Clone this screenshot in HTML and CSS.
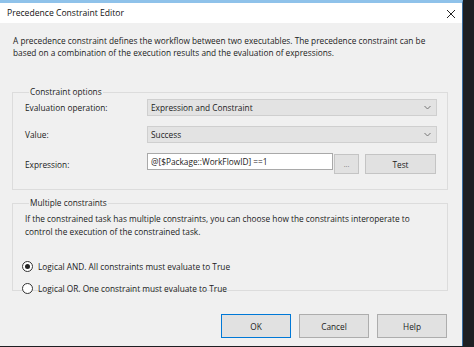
FILE: index.html
```html
<!DOCTYPE html>
<html>
<head>
<meta charset="utf-8">
<link rel="stylesheet" href="styles.css">
</head>
<body>
<div class="window">
  <div class="titlebar">
    <span class="title">Precedence Constraint Editor</span>
    <svg class="close" width="10" height="10" viewBox="0 0 10 10"><path d="M1 1 L9 9 M9 1 L1 9" stroke="#222" stroke-width="1" fill="none"/></svg>
  </div>
  <div class="content">
    <p class="desc">A precedence constraint defines the workflow between two executables. The precedence constraint can be based on a combination of the execution results and the evaluation of expressions.</p>

    <fieldset class="group group-options">
      <legend>Constraint options</legend>
      <div class="grid">
        <label class="lbl">Evaluation operation:</label>
        <div class="combo"><span>Expression and Constraint</span><svg width="7" height="5" viewBox="0 0 7 5"><path d="M0.5 1 L3.5 4 L6.5 1" stroke="#777" fill="none"/></svg></div>
        <label class="lbl">Value:</label>
        <div class="combo"><span>Success</span><svg width="7" height="5" viewBox="0 0 7 5"><path d="M0.5 1 L3.5 4 L6.5 1" stroke="#777" fill="none"/></svg></div>
        <label class="lbl lbl-expr">Expression:</label>
        <div class="expr-row">
          <div class="input">@[$Package::WorkFlowID] ==1</div>
          <div class="btn btn-dots">...</div>
          <div class="btn btn-test">Test</div>
        </div>
      </div>
    </fieldset>

    <fieldset class="group group-multi">
      <legend>Multiple constraints</legend>
      <p class="multi-desc">If the constrained task has multiple constraints, you can choose how the constraints interoperate to control the execution of the constrained task.</p>
      <div class="radios">
        <div class="radio-row"><span class="radio checked"></span><span>Logical AND. All constraints must evaluate to True</span></div>
        <div class="radio-row"><span class="radio"></span><span>Logical OR. One constraint must evaluate to True</span></div>
      </div>
    </fieldset>

    <div class="buttons">
      <div class="btn btn-main btn-ok">OK</div>
      <div class="btn btn-main">Cancel</div>
      <div class="btn btn-main">Help</div>
    </div>
  </div>
</div>
</body>
</html>
```
FILE: styles.css
```css
html, body {
  margin: 0;
  padding: 0;
}
body {
  width: 474px;
  height: 347px;
  background: #1e1f22;
  overflow: hidden;
  font-family: "Open Sans", "Noto Sans", sans-serif;
  font-size: 8.3px;
  color: #1b1b1b;
}
.window {
  width: 463px;
  height: 346px;
  box-sizing: border-box;
  border-top: 3px solid #8fc2ea;
  border-right: 1px solid #3a6ea0;
  background: #f0f0f0;
  display: flex;
  flex-direction: column;
}
.titlebar {
  height: 20px;
  background: #ffffff;
  display: flex;
  align-items: center;
  justify-content: space-between;
  padding: 0 6px 0 7px;
  flex: none;
}
.title {
  font-size: 8.6px;
  color: #111;
}
.close {
  margin-top: 1px;
}
.content {
  padding: 0 14px 0 12px;
  display: flex;
  flex-direction: column;
}
.desc {
  margin: 12px 0 0 1px;
  line-height: 12px;
}
.group {
  margin: 0;
  border: 1px solid #dcdcdc;
  padding: 0;
  min-width: 0;
}
.group legend {
  padding: 0 1px;
  margin-left: 4px;
  line-height: 12px;
}
.group-options {
  margin-top: 27px;
  padding: 1px 10px 15px 12px;
}
.grid {
  display: grid;
  grid-template-columns: 122px 1fr;
  grid-template-rows: 17px 17px 21px;
  row-gap: 10px;
  align-items: center;
}
.lbl-expr {
  padding-top: 2px;
}
.combo {
  height: 17px;
  box-sizing: border-box;
  border: 1px solid #cfcfcf;
  background: #e3e3e3;
  display: flex;
  align-items: center;
  justify-content: space-between;
  padding: 0 5px 0 3px;
}
.expr-row {
  display: flex;
  align-items: flex-start;
  height: 21px;
}
.input {
  width: 186px;
  height: 17px;
  box-sizing: border-box;
  border: 1px solid #a9a9a9;
  background: #ffffff;
  padding: 0 3px;
  line-height: 15px;
}
.btn {
  box-sizing: border-box;
  border: 1px solid #c4c4c4;
  background: #e1e1e1;
  display: flex;
  align-items: center;
  justify-content: center;
}
.btn-dots {
  width: 25px;
  height: 20px;
  margin-left: 1px;
  margin-top: 1px;
  color: #777;
  font-size: 7px;
}
.btn-test {
  width: 71px;
  height: 20px;
  margin-left: 6px;
  margin-top: 1px;
}
.group-multi {
  margin-top: 7px;
  padding: 1px 10px 0 12px;
  height: 94px;
  box-sizing: border-box;
}
.multi-desc {
  margin: 2px 0 0 0;
  line-height: 13px;
}
.radios {
  margin-top: 22px;
  display: flex;
  flex-direction: column;
  gap: 10px;
  margin-left: -3px;
}
.radio-row {
  display: flex;
  align-items: center;
  gap: 5px;
  height: 12px;
}
.radio {
  width: 11px;
  height: 11px;
  box-sizing: border-box;
  border: 1px solid #333;
  border-radius: 50%;
  background: #fff;
  display: flex;
  align-items: center;
  justify-content: center;
}
.radio.checked::after {
  content: "";
  width: 5px;
  height: 5px;
  border-radius: 50%;
  background: #222;
}
.buttons {
  margin-top: 23px;
  display: flex;
  justify-content: flex-end;
  gap: 8px;
  padding-right: 1px;
}
.btn-main {
  width: 70px;
  height: 24px;
  border-color: #adadad;
}
.btn-ok {
  border: 1px solid #0078d7;
}
```
